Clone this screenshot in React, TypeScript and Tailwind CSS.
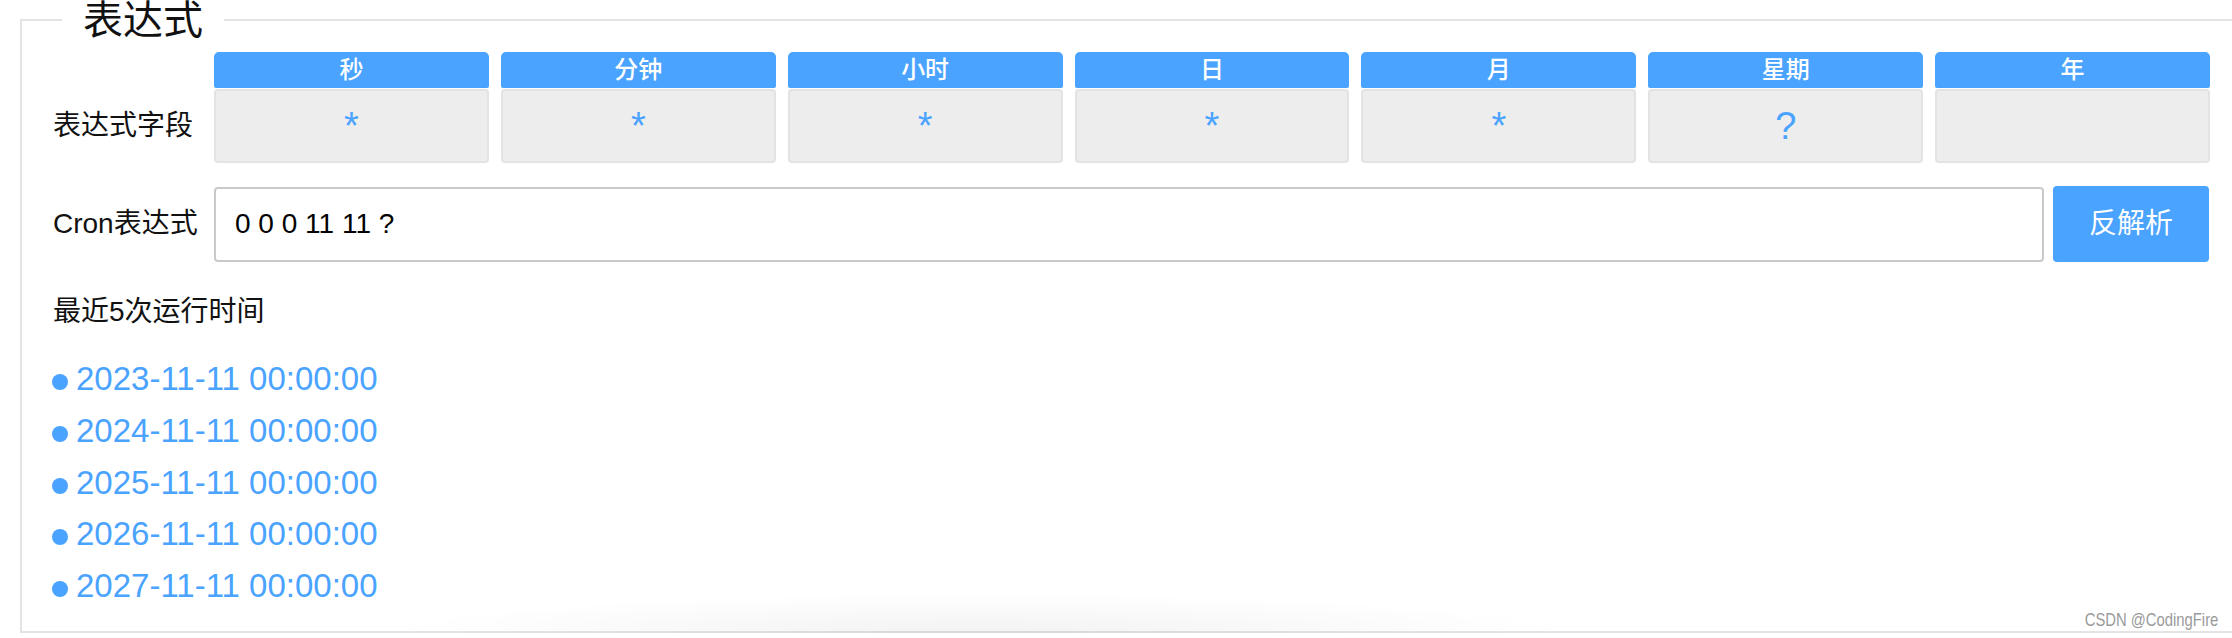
import React from "react";

const fields = [
  { name: "秒", value: "*" },
  { name: "分钟", value: "*" },
  { name: "小时", value: "*" },
  { name: "日", value: "*" },
  { name: "月", value: "*" },
  { name: "星期", value: "?" },
  { name: "年", value: "" },
];

const runs = [
  "2023-11-11 00:00:00",
  "2024-11-11 00:00:00",
  "2025-11-11 00:00:00",
  "2026-11-11 00:00:00",
  "2027-11-11 00:00:00",
];

export default function App() {
  return (
    <div
      className="relative w-[2232px] h-[638px] overflow-hidden bg-white text-[#111]"
      style={{ fontFamily: '"Liberation Sans", "Noto Sans CJK SC", Arial, sans-serif' }}
    >
      <fieldset className="ml-[20px] w-[2240px] h-[633px] border-2 border-[#e4e4e4]">
        <legend className="ml-[40px] px-[21px] text-[40px] leading-[40px] text-[#111]">表达式</legend>

        {/* Fields row */}
        <div className="flex mt-[12px]">
          <div className="w-[192px] pl-[31px] pt-[37px] flex items-center text-[28px] leading-[36px]">
            表达式字段
          </div>
          <div className="grid grid-cols-7 gap-x-[12px] w-[1996px]">
            {fields.map((f) => (
              <div key={f.name} className="flex flex-col">
                <div className="h-[36px] rounded-t-[5px] rounded-b-[2px] bg-[#4aa3ff] text-white text-[24px] leading-[36px] text-center font-medium">
                  {f.name}
                </div>
                <div className="mt-[1px] h-[74px] rounded-[4px] border-2 border-[#e3e3e3] bg-[#ededed] pt-[16px] text-center text-[38px] leading-[38px] text-[#4aa3ff]">
                  {f.value}
                </div>
              </div>
            ))}
          </div>
        </div>

        {/* Cron row */}
        <div className="flex items-center mt-[23px]">
          <div className="w-[192px] pl-[31px] text-[28px] leading-[36px]">Cron表达式</div>
          <div className="w-[1830px] h-[75px] rounded-[4px] border-2 border-[#c9c9c9] bg-white flex items-center pl-[19px] text-[28px] text-black">
            0 0 0 11 11 ?
          </div>
          <button className="ml-[9px] w-[156px] h-[76px] rounded-[4px] bg-[#4aa3ff] text-white text-[28px]">
            反解析
          </button>
        </div>

        {/* Recent runs */}
        <div className="pl-[31px] mt-[30px] text-[28px] leading-[40px]">最近5次运行时间</div>
        <ul className="pl-[30px] mt-[21px]">
          {runs.map((r) => (
            <li key={r} className="text-[33px] leading-[51.75px] text-[#4aa3ff] whitespace-nowrap">
              <span className="inline-block w-[16px] h-[16px] rounded-full bg-[#4aa3ff] mr-[8px]" />
              {r}
            </li>
          ))}
        </ul>
      </fieldset>

      {/* faint bottom shadow */}
      <div className="pointer-events-none absolute left-[380px] bottom-[5px] w-[1200px] h-[40px] bg-[radial-gradient(ellipse_at_bottom,rgba(0,0,0,0.05),rgba(0,0,0,0)_70%)]" />

      <div className="absolute right-[14px] bottom-[8px] origin-right scale-x-[0.78] text-[19px] leading-[20px] text-[#9a9a9a] whitespace-nowrap">
        CSDN @CodingFire
      </div>
    </div>
  );
}
